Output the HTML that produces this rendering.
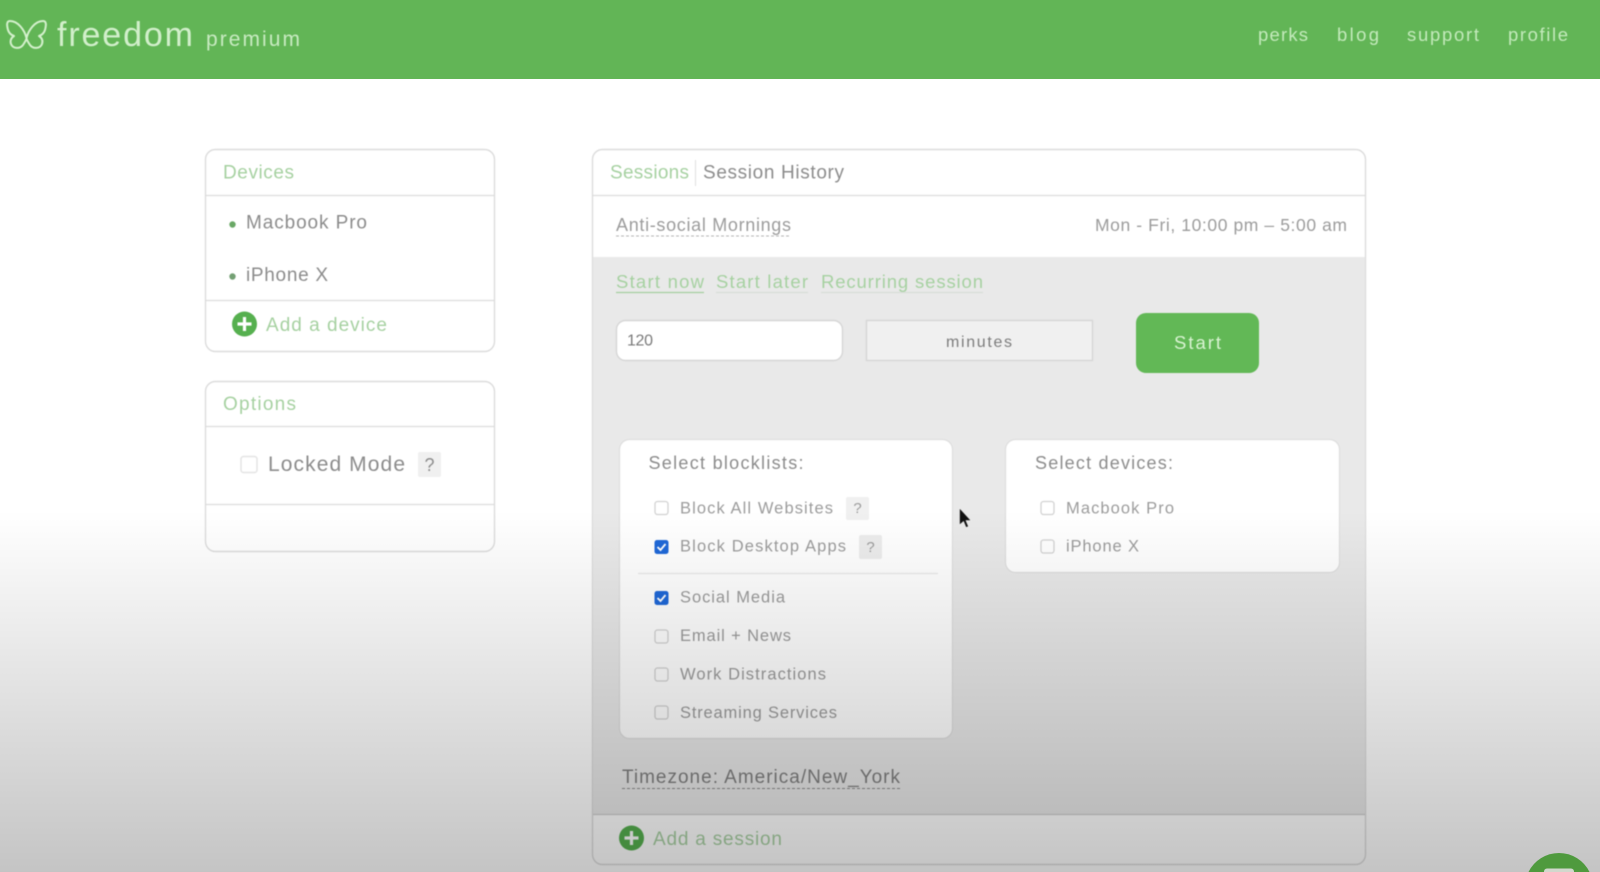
<!DOCTYPE html>
<html lang="en">
<head>
<meta charset="utf-8">
<title>Freedom Premium</title>
<style>
html,body{margin:0;padding:0;width:1600px;height:872px;overflow:hidden;background:#fff}
svg{display:block;position:absolute;left:0;top:0}
.b{filter:blur(.45px)}
text{font-family:"Liberation Sans",sans-serif}
.g{fill:#a6d1a1}.t{fill:#8c8c8c}.d{fill:#808080}.l{fill:#9c9c9c}
</style>
</head>
<body>
<svg width="1600" height="872" viewBox="0 0 1600 872" xmlns="http://www.w3.org/2000/svg">
<defs>
<linearGradient id="fade" x1="0" y1="510" x2="0" y2="872" gradientUnits="userSpaceOnUse">
<stop offset="0" stop-color="#000" stop-opacity="0"/>
<stop offset="1" stop-color="#000" stop-opacity=".23"/>
</linearGradient>
</defs>
<rect width="1600" height="872" fill="#fff"/>

<g class="b">
<!-- Left panels -->
<rect x="205.500" y="149.500" width="289" height="202" rx="10" fill="#fff" stroke="#dcdcdc" stroke-width="1.400"/>
<path d="M205 195.500H495M205 300.500H495" stroke="#dcdcdc" stroke-width="1.200"/>
<text x="223" y="178.500" font-size="19" class="g" textLength="71">Devices</text>
<circle cx="232.500" cy="224.500" r="3.200" fill="#6aa866"/>
<text x="246" y="228.500" font-size="19" class="t" textLength="121">Macbook Pro</text>
<circle cx="232.500" cy="276.500" r="3.200" fill="#74a074"/>
<text x="246" y="281" font-size="19" class="t" textLength="82">iPhone X</text>
<circle cx="244.500" cy="324" r="12.500" fill="#56b04f"/>
<path d="M244.500 317v14M237.500 324h14" stroke="#fff" stroke-width="3.200"/>
<text x="266" y="331" font-size="19" class="g" textLength="121">Add a device</text>

<rect x="205.500" y="381.500" width="289" height="170" rx="10" fill="#fff" stroke="#dcdcdc" stroke-width="1.400"/>
<path d="M205 426.500H495M205 504.500H495" stroke="#dcdcdc" stroke-width="1.200"/>
<text x="223" y="410" font-size="19" class="g" textLength="73">Options</text>
<rect x="241" y="456.500" width="16" height="16" rx="2.500" fill="#fff" stroke="#e4e4e4" stroke-width="1.500"/>
<text x="268" y="471" font-size="21" class="t" textLength="137">Locked Mode</text>
<rect x="418" y="452" width="23" height="25" rx="2" fill="#f0f0f0"/>
<text x="429.500" y="471" font-size="18" class="t" text-anchor="middle">?</text>

<!-- Sessions panel -->
<rect x="592.500" y="149.500" width="773" height="715" rx="10" fill="#fff" stroke="#dcdcdc" stroke-width="1.400"/>
<rect x="593" y="257" width="772" height="557" fill="#e9e9e9"/>
<path d="M592 195.500H1366" stroke="#dcdcdc" stroke-width="1.200"/>
<path d="M593 814.500H1365" stroke="#d0d0d0" stroke-width="1.200"/>
<path d="M695.500 160v26" stroke="#e2e2e2" stroke-width="1.100"/>
<text x="610" y="178.500" font-size="19" class="g" textLength="79">Sessions</text>
<text x="703" y="178.500" font-size="19" class="t" textLength="141">Session History</text>
<text x="616" y="231" font-size="18" class="l" textLength="175">Anti-social Mornings</text>
<path d="M616 236H791" stroke="#b4b4b4" stroke-width="1.100" stroke-dasharray="3 2"/>
<text x="1095" y="231" font-size="17.500" class="l" textLength="252">Mon - Fri, 10:00 pm – 5:00 am</text>

<text x="616" y="288" font-size="18.500" class="g" textLength="88">Start now</text>
<path d="M616 292.500H704" stroke="#a5cfa0" stroke-width="1.300"/>
<text x="716" y="288" font-size="18.500" class="g" textLength="92">Start later</text>
<path d="M716 292.500H808" stroke="#d8ddd8" stroke-width="1.300"/>
<text x="821" y="288" font-size="18.500" class="g" textLength="162">Recurring session</text>
<path d="M821 292.500H983" stroke="#d8ddd8" stroke-width="1.300"/>

<rect x="616.500" y="320.500" width="226" height="40" rx="9" fill="#fff" stroke="#d6d6d6" stroke-width="1.400"/>
<text x="627" y="345.500" font-size="16" fill="#7a7a7a" textLength="26">120</text>
<rect x="866.500" y="320.500" width="226" height="40" fill="#f0f0f0" stroke="#d6d6d6" stroke-width="1.400"/>
<text x="946" y="347" font-size="16" fill="#7c7c7c" textLength="66">minutes</text>
<rect x="1136" y="313" width="123" height="60" rx="10" fill="#62b856"/>
<text x="1174" y="349" font-size="18.500" fill="#d9f3d2" textLength="47">Start</text>

<!-- Blocklist card -->
<rect x="619.500" y="439.500" width="333" height="299" rx="10" fill="#fff" stroke="#dedede" stroke-width="1.200"/>
<text x="648.500" y="469" font-size="18" class="t" textLength="155">Select blocklists:</text>

<rect x="655" y="501.500" width="13" height="13" rx="2.500" fill="#fff" stroke="#d2d2d2" stroke-width="1.300"/>
<text x="680" y="513.500" font-size="16.500" class="l" textLength="153">Block All Websites</text>
<rect x="846" y="497" width="23" height="23" rx="2" fill="#f0f0f0"/>
<text x="857.500" y="513" font-size="15" class="l" text-anchor="middle">?</text>

<rect x="654.500" y="540" width="14" height="14" rx="2.500" fill="#1f68d8"/>
<path d="M657.500 547l3 3 5-6" fill="none" stroke="#fff" stroke-width="1.800"/>
<text x="680" y="551.500" font-size="16.500" class="l" textLength="166">Block Desktop Apps</text>
<rect x="859" y="535" width="23" height="24" rx="2" fill="#ececec"/>
<text x="870.500" y="552" font-size="15" class="l" text-anchor="middle">?</text>

<path d="M638 573.500H938" stroke="#e8e8e8" stroke-width="1.200"/>

<rect x="654.500" y="591" width="14" height="14" rx="2.500" fill="#1f68d8"/>
<path d="M657.500 598l3 3 5-6" fill="none" stroke="#fff" stroke-width="1.800"/>
<text x="680" y="602.500" font-size="16.500" class="l" textLength="105">Social Media</text>

<rect x="655" y="630" width="13" height="13" rx="2.500" fill="#fff" stroke="#d2d2d2" stroke-width="1.300"/>
<text x="680" y="641" font-size="16.500" class="l" textLength="111">Email + News</text>
<rect x="655" y="668" width="13" height="13" rx="2.500" fill="#fff" stroke="#d2d2d2" stroke-width="1.300"/>
<text x="680" y="679.500" font-size="16.500" class="l" textLength="146">Work Distractions</text>
<rect x="655" y="706" width="13" height="13" rx="2.500" fill="#fff" stroke="#d2d2d2" stroke-width="1.300"/>
<text x="680" y="718" font-size="16.500" class="l" textLength="157">Streaming Services</text>

<!-- Devices card -->
<rect x="1005.500" y="439.500" width="334" height="133" rx="10" fill="#fff" stroke="#dedede" stroke-width="1.200"/>
<text x="1035" y="469" font-size="18" class="t" textLength="138">Select devices:</text>
<rect x="1041" y="501.500" width="13" height="13" rx="2.500" fill="#fff" stroke="#d2d2d2" stroke-width="1.300"/>
<text x="1066" y="513.500" font-size="16.500" class="l" textLength="108">Macbook Pro</text>
<rect x="1041" y="540" width="13" height="13" rx="2.500" fill="#fff" stroke="#d2d2d2" stroke-width="1.300"/>
<text x="1066" y="551.500" font-size="16.500" class="l" textLength="73">iPhone X</text>

<!-- Timezone / add a session -->
<text x="622" y="783" font-size="19" fill="#808080" textLength="278">Timezone: America/New_York</text>
<path d="M622 788.500H901" stroke="#8c8c8c" stroke-width="1.100" stroke-dasharray="3 2"/>
<circle cx="631.500" cy="838" r="12.500" fill="#56b04f"/>
<path d="M631.500 831v14M624.500 838h14" stroke="#fff" stroke-width="3.200"/>
<text x="653" y="845" font-size="19" fill="#a8d0a3" textLength="129">Add a session</text>
</g>

<!-- Fade overlay -->
<rect y="510" width="1600" height="362" fill="url(#fade)"/>

<!-- Header -->
<rect width="1600" height="79" fill="#62b556"/>
<g class="b">
<g fill="none" stroke="#d4f0cd" stroke-width="2" stroke-linejoin="round" stroke-linecap="round">
<path d="M26.500 38C24.500 30 18 21 10 21 6 21 7 26 8 30c1 3 3 5 6 6-3 2-4 5-3 8 2 5 9 5 12 1 2-3 3.500-6 3.500-7z"/>
<path d="M26.500 38C28.500 30 35 21 43 21 47 21 46 26 45 30c-1 3-3 5-6 6 3 2 4 5 3 8-2 5-9 5-12 1-2-3-3.500-6-3.500-7z"/>
</g>
<text x="57" y="46" font-size="34" fill="#d2efcb" textLength="136">freedom</text>
<text x="206" y="46" font-size="21" fill="#c8eac1" textLength="94">premium</text>
<text x="1258" y="41" font-size="18.500" fill="#c4eabc" textLength="50">perks</text>
<text x="1337" y="41" font-size="18.500" fill="#c4eabc" textLength="42">blog</text>
<text x="1407" y="41" font-size="18.500" fill="#c4eabc" textLength="72">support</text>
<text x="1508" y="41" font-size="18.500" fill="#c4eabc" textLength="60">profile</text>

<!-- Cursor -->
<path d="M959.500 508v17l4-3.500 2.500 6 2.500-1-2.500-6h5z" fill="#111" stroke="#eee" stroke-width=".6"/>
</g>

<!-- Chat bubble -->
<path d="M1528.500 872A34 34 0 0 1 1589.500 872Z" fill="#4f9a3e"/>
<path d="M1544 872v-0.500a3 3 0 0 1 3-3h24a3 3 0 0 1 3 3v0.500z" fill="#d2d8cd"/>
</svg>
</body>
</html>
